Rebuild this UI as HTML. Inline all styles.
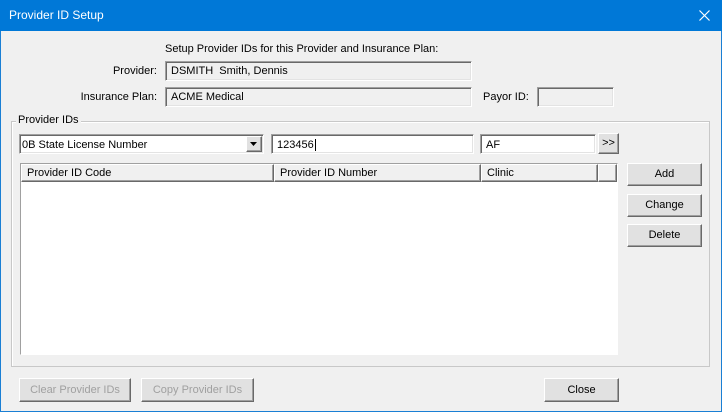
<!DOCTYPE html>
<html><head><style>
*{box-sizing:border-box;margin:0;padding:0}
body{width:722px;height:412px;background:#f0f0f0;font-family:"Liberation Sans",Tahoma,sans-serif;font-size:11px;color:#000;position:relative;overflow:hidden}
.a{position:absolute}
.win{left:0;top:0;width:722px;height:412px;border:1px solid #1a7fd4}
.title{left:0;top:0;width:722px;height:31px;background:#0078d7;color:#fff;font-size:12px;line-height:31px;padding-left:9px}
.lbl{white-space:nowrap;line-height:13px}
.ro{background:#f0f0f0;border-top:1px solid #a0a0a0;border-left:1px solid #a0a0a0;border-bottom:1px solid #fff;border-right:1px solid #fff;box-shadow:inset 1px 1px 0 #696969,inset -1px -1px 0 #e3e3e3;padding:3px 0 0 5px;line-height:12px}
.ed{background:#fff;border-top:1px solid #a0a0a0;border-left:1px solid #a0a0a0;border-bottom:1px solid #fff;border-right:1px solid #fff;box-shadow:inset 1px 1px 0 #696969,inset -1px -1px 0 #e3e3e3;padding:4px 0 0 5px;line-height:12px}
.btn{background:#e1e1e1;border:1px solid #fff;border-right-color:#696969;border-bottom-color:#696969;box-shadow:inset -1px -1px 0 #a0a0a0;text-align:center}
.dis{color:#a0a0a0}
.grp{border:1px solid #c8c8c8;box-shadow:inset 1px 1px 0 #fff}
.hd{background:#f0f0f0;border:1px solid #fff;border-right-color:#696969;border-bottom-color:#696969;box-shadow:inset -1px -1px 0 #a0a0a0;padding-left:5px;line-height:16px;top:164px;height:18px}
</style></head><body>
<div class="a win"></div>
<div class="a title">Provider ID Setup</div>
<svg class="a" style="left:699px;top:10px" width="11" height="11"><path d="M0.5 0.5L10.5 10.5M10.5 0.5L0.5 10.5" stroke="#fff" stroke-width="1.2"/></svg>

<div class="a lbl" style="left:165px;top:43px">Setup Provider IDs for this Provider and Insurance Plan:</div>
<div class="a lbl" style="left:60px;width:97px;text-align:right;top:65px">Provider:</div>
<div class="a ro" style="left:165px;top:61px;width:307px;height:20px">DSMITH&nbsp; Smith, Dennis</div>
<div class="a lbl" style="left:40px;width:117px;text-align:right;top:91px">Insurance Plan:</div>
<div class="a ro" style="left:165px;top:87px;width:307px;height:20px">ACME Medical</div>
<div class="a lbl" style="left:483px;top:91px">Payor ID:</div>
<div class="a ro" style="left:537px;top:87px;width:77px;height:20px"></div>

<div class="a grp" style="left:11px;top:121px;width:699px;height:246px"></div>
<div class="a lbl" style="left:16px;top:114px;background:#f0f0f0;padding:0 2px">Provider IDs</div>

<div class="a ed" style="left:19px;top:134px;width:245px;height:20px;padding-left:2px">0B State License Number</div>
<div class="a btn" style="left:246px;top:136px;width:16px;height:16px"></div>
<svg class="a" style="left:250px;top:142px" width="8" height="5"><path d="M0 0H7L3.5 4Z" fill="#000"/></svg>
<div class="a ed" style="left:271px;top:134px;width:203px;height:20px">123456<span style="border-left:1px solid #000;margin-left:1px"></span></div>
<div class="a ed" style="left:480px;top:134px;width:116px;height:20px">AF</div>
<div class="a btn" style="left:598px;top:133px;width:21px;height:21px;line-height:19px">&gt;&gt;</div>

<div class="a" style="left:20px;top:163px;width:598px;height:192px;background:#fff;border-top:1px solid #a0a0a0;border-left:1px solid #a0a0a0;border-right:1px solid #fff;border-bottom:1px solid #fff"></div>
<div class="a hd" style="left:21px;width:253px">Provider ID Code</div>
<div class="a hd" style="left:274px;width:207px">Provider ID Number</div>
<div class="a hd" style="left:481px;width:117px">Clinic</div>
<div class="a hd" style="left:598px;width:19px"></div>

<div class="a btn" style="left:627px;top:163px;width:75px;height:23px;line-height:21px">Add</div>
<div class="a btn" style="left:627px;top:194px;width:75px;height:23px;line-height:21px">Change</div>
<div class="a btn" style="left:627px;top:224px;width:75px;height:23px;line-height:21px">Delete</div>

<div class="a btn dis" style="left:19px;top:378px;width:112px;height:24px;line-height:22px">Clear Provider IDs</div>
<div class="a btn dis" style="left:141px;top:378px;width:113px;height:24px;line-height:22px">Copy Provider IDs</div>
<div class="a btn" style="left:544px;top:378px;width:75px;height:24px;line-height:22px">Close</div>
</body></html>
